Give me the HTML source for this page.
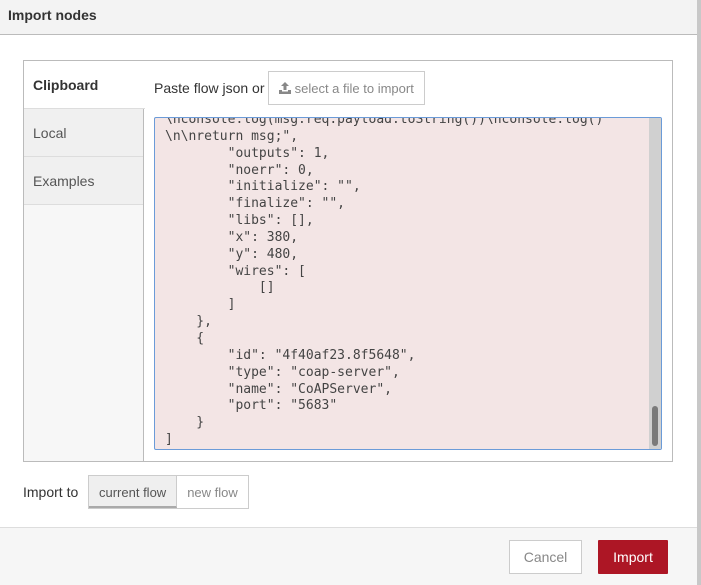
<!DOCTYPE html>
<html><head><style>
*{box-sizing:border-box;margin:0;padding:0}
body{width:701px;height:585px;overflow:hidden;background:#fff;font-family:"Liberation Sans",sans-serif;position:relative}
.hdr{position:absolute;left:0;top:0;width:697px;height:35px;background:#f3f3f3;border-bottom:1px solid #bbb;font-size:14px;color:#333;padding:7px 8px;font-weight:bold}
.rb{position:absolute;right:0;top:0;width:4px;height:585px;background:#c8c8c8}
.box{position:absolute;left:23px;top:60px;width:650px;height:402px;border:1px solid #bbb}
.side{position:absolute;left:0;top:0;width:120px;height:400px;background:#f7f7f7;border-right:1px solid #bbb}
.tab{height:48px;border-bottom:1px solid #ddd;font-size:14px;color:#555;padding:16px 9px;background:#f0f0f0}
.tab.a{background:#fff;color:#333;font-weight:bold;border-bottom:1px solid #ddd;width:121px}
.lbl{position:absolute;left:130px;top:19px;font-size:14px;color:#333}
.fbtn{position:absolute;left:244px;top:10px;width:157px;height:34px;border:1px solid #ccc;font-size:13px;color:#888;padding:9px 10px}
.ta{position:absolute;left:130px;top:56px;width:508px;height:333px;background:#f3e5e5;border:1px solid #6b9bd8;border-radius:2px;overflow:hidden}
.ta pre{position:absolute;left:10px;top:-6px;font-family:"DejaVu Sans Mono",monospace;font-size:13px;line-height:16.85px;color:#444}
.sb{position:absolute;right:0;top:0;width:12px;height:100%;background:#d0d0d0}
.sb i{position:absolute;left:3px;top:288px;width:6px;height:40px;background:#7a7a7a;border-radius:3px}
.it{position:absolute;left:23px;top:484px;font-size:14px;color:#333}
.tg{position:absolute;left:88px;top:475px;height:34px;border:1px solid #ccc;display:flex;font-size:13px}
.tg div{padding:9px 10px}
.tg .c{background:#efefef;color:#555;border-right:1px solid #ccc;border-bottom:2px solid #aaa}
.tg .n{color:#888}
.ftr{position:absolute;left:0;top:527px;width:697px;height:58px;background:#f6f6f6;border-top:1px solid #ddd}
.cb{position:absolute;left:509px;top:540px;width:73px;height:34px;border:1px solid #ccc;background:#fff;color:#888;font-size:14px;text-align:center;line-height:32px}
.ib{position:absolute;left:598px;top:540px;width:70px;height:34px;background:#ad1625;color:#fff;font-size:14px;text-align:center;line-height:34px;border-radius:1px}
</style></head><body>
<div class="hdr">Import nodes</div>
<div class="rb"></div>
<div class="box">
 <div class="side"><div class="tab a">Clipboard</div><div class="tab">Local</div><div class="tab">Examples</div></div>
 <div class="lbl">Paste flow json or</div>
 <div class="fbtn"><svg width="12" height="12" viewBox="0 0 12 12" style="vertical-align:-1px"><path d="M6 0L10 4H7.5V8H4.5V4H2Z M0 8H3V9.5H9V8H12V12H0Z" fill="#888"/></svg> select a file to import</div>
 <div class="ta"><pre>\nconsole.log(msg.req.payload.toString())\nconsole.log()
\n\nreturn msg;",
        "outputs": 1,
        "noerr": 0,
        "initialize": "",
        "finalize": "",
        "libs": [],
        "x": 380,
        "y": 480,
        "wires": [
            []
        ]
    },
    {
        "id": "4f40af23.8f5648",
        "type": "coap-server",
        "name": "CoAPServer",
        "port": "5683"
    }
]</pre><div class="sb"><i></i></div></div>
</div>
<div class="it">Import to</div>
<div class="tg"><div class="c">current flow</div><div class="n">new flow</div></div>
<div class="ftr"></div>
<div class="cb">Cancel</div>
<div class="ib">Import</div>
</body></html>
